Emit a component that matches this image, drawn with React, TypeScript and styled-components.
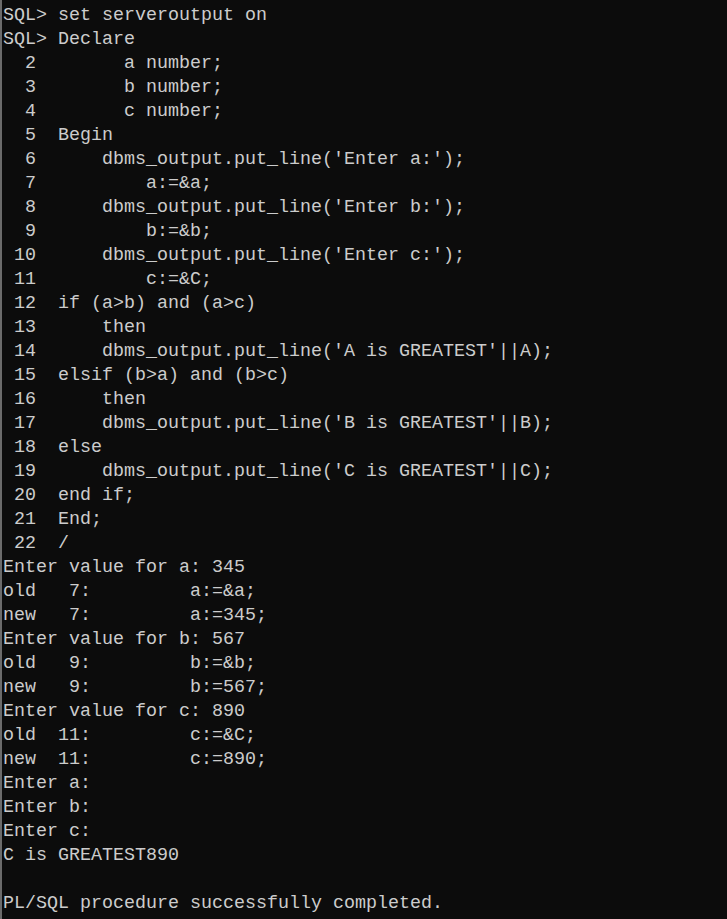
import React from "react";
import styled, { createGlobalStyle } from "styled-components";

const Global = createGlobalStyle`
  html, body { margin: 0; padding: 0; background: #0c0c0c; }
`;

const Terminal = styled.div`
  box-sizing: border-box;
  width: 727px;
  height: 919px;
  overflow: hidden;
  background: #0c0c0c;
  border-left: 2px solid #6b6b6b;
  padding: 4px 0 0 1px;
`;

const Line = styled.pre`
  margin: 0;
  height: 24px;
  font-family: "Liberation Mono", "DejaVu Sans Mono", monospace;
  font-size: 18.333px;
  line-height: 24px;
  color: #cccccc;
  white-space: pre;
`;

const lines: string[] = [
  "SQL> set serveroutput on",
  "SQL> Declare",
  "  2        a number;",
  "  3        b number;",
  "  4        c number;",
  "  5  Begin",
  "  6      dbms_output.put_line('Enter a:');",
  "  7          a:=&a;",
  "  8      dbms_output.put_line('Enter b:');",
  "  9          b:=&b;",
  " 10      dbms_output.put_line('Enter c:');",
  " 11          c:=&C;",
  " 12  if (a>b) and (a>c)",
  " 13      then",
  " 14      dbms_output.put_line('A is GREATEST'||A);",
  " 15  elsif (b>a) and (b>c)",
  " 16      then",
  " 17      dbms_output.put_line('B is GREATEST'||B);",
  " 18  else",
  " 19      dbms_output.put_line('C is GREATEST'||C);",
  " 20  end if;",
  " 21  End;",
  " 22  /",
  "Enter value for a: 345",
  "old   7:         a:=&a;",
  "new   7:         a:=345;",
  "Enter value for b: 567",
  "old   9:         b:=&b;",
  "new   9:         b:=567;",
  "Enter value for c: 890",
  "old  11:         c:=&C;",
  "new  11:         c:=890;",
  "Enter a:",
  "Enter b:",
  "Enter c:",
  "C is GREATEST890",
  "",
  "PL/SQL procedure successfully completed.",
];

export default function App() {
  return (
    <>
      <Global />
      <Terminal>
        {lines.map((l, i) => (
          <Line key={i}>{l}</Line>
        ))}
      </Terminal>
    </>
  );
}
